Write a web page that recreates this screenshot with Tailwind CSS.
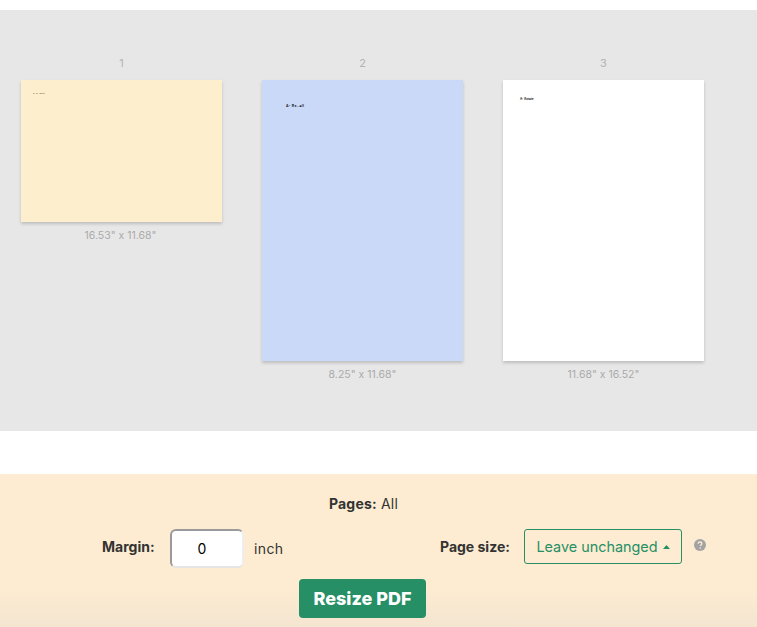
<!DOCTYPE html>
<html lang="en">
<head>
    <meta charset="UTF-8">
    <meta name="viewport" content="width=device-width, initial-scale=1.0">
    <title>Resize PDF</title>
    <script src="https://cdn.jsdelivr.net/npm/@tailwindcss/browser@4"></script>
</head>
<body class="h-screen overflow-hidden bg-white font-[Inter,sans-serif]">

    <!-- page previews -->
    <div class="mt-[10px] h-[421px] bg-[#e7e7e7] pl-[21px] pt-[45px]">
        <div class="flex items-start gap-[40px]">
            <div class="w-[201px]">
                <div class="h-[16px] text-center text-[11px] leading-[16px] text-[#b3b3b3]">1</div>
                <div class="mt-[9px] h-[142px] bg-[#fdefcd] pl-[12px] pt-[10px] shadow-[0_2px_3px_rgba(0,0,0,0.18)]">
                    <div class="text-[5px] leading-[4px] font-bold tracking-[0.2px] text-black">. . ...</div>
                </div>
                <div class="mt-[6px] pr-[2px] text-center text-[10.5px] leading-[15px] text-[#aaaaaa]">16.53" x 11.68"</div>
            </div>
            <div class="w-[201px]">
                <div class="h-[16px] text-center text-[11px] leading-[16px] text-[#b3b3b3]">2</div>
                <div class="mt-[9px] h-[281px] bg-[#c9d9f7] pl-[24px] pt-[24px] shadow-[0_2px_3px_rgba(0,0,0,0.18)]">
                    <div class="text-[3.5px] leading-[4px] font-semibold tracking-[0.3px] text-black">A- Rx..all</div>
                </div>
                <div class="mt-[6px] text-center text-[10.5px] leading-[15px] text-[#aaaaaa]">8.25" x 11.68"</div>
            </div>
            <div class="w-[201px]">
                <div class="h-[16px] text-center text-[11px] leading-[16px] text-[#b3b3b3]">3</div>
                <div class="mt-[9px] h-[281px] bg-white pl-[17px] pt-[17px] shadow-[0_2px_3px_rgba(0,0,0,0.18)]">
                    <div class="text-[3px] leading-[4px] font-semibold text-black">A- Rotate</div>
                </div>
                <div class="mt-[6px] text-center text-[10.5px] leading-[15px] text-[#aaaaaa]">11.68" x 16.52"</div>
            </div>
        </div>
    </div>

    <!-- options -->
    <div class="mt-[43px] h-[153px] bg-gradient-to-b from-[#fdecd1] from-[75%] to-[#f4e5d1] text-[#333333]">
        <div class="pt-[21px] pr-[30px] text-center text-[14px] leading-[18px] tracking-[0.2px]">
            <span class="font-bold">Pages:</span> All
        </div>
        <div class="mt-[16px] flex items-start pl-[102px] text-[14px]">
            <div class="mt-[9px] w-[68px] leading-[18px] font-bold">Margin:</div>
            <input type="text" value="0" class="h-[39px] w-[74px] rounded-[6px] border-2 border-t-[#9a9a9a] border-r-[#eeeeee] border-b-[#e5e5e5] border-l-[#9a9a9a] bg-white pr-[10px] text-center text-[14px] text-black">
            <div class="mt-[11px] ml-[10px] w-[186px] text-[14px] leading-[18px] tracking-[0.4px]">inch</div>
            <div class="mt-[9px] w-[84px] leading-[18px] font-bold">Page size:</div>
            <div class="flex h-[35px] w-[158px] items-center justify-center gap-[5px] rounded-[3px] border border-[#268f66] text-[14.4px] text-[#268f66]">
                Leave unchanged
                <svg width="7" height="4" viewBox="0 0 7 4" class="fill-[#268f66]"><path d="M3.5 0 7 4H0z"/></svg>
            </div>
            <svg width="12" height="12" viewBox="0 0 12 12" class="mt-[10px] ml-[12px]">
                <circle cx="6" cy="6" r="6" fill="#a3a3a3"/>
                <path d="M4.1 4.7C4.2 3.6 5 3 6 3s1.9.6 1.9 1.6c0 1.3-1.6 1.3-1.6 2.5" fill="none" stroke="#fdecd1" stroke-width="1.3"/>
                <circle cx="6.2" cy="9" r=".8" fill="#fdecd1"/>
            </svg>
        </div>
        <div class="mt-[11px] flex pl-[299px]">
            <button class="h-[39px] w-[127px] rounded-[4px] bg-[#268f66] text-[18px] font-extrabold text-white">Resize PDF</button>
        </div>
    </div>

</body>
</html>
